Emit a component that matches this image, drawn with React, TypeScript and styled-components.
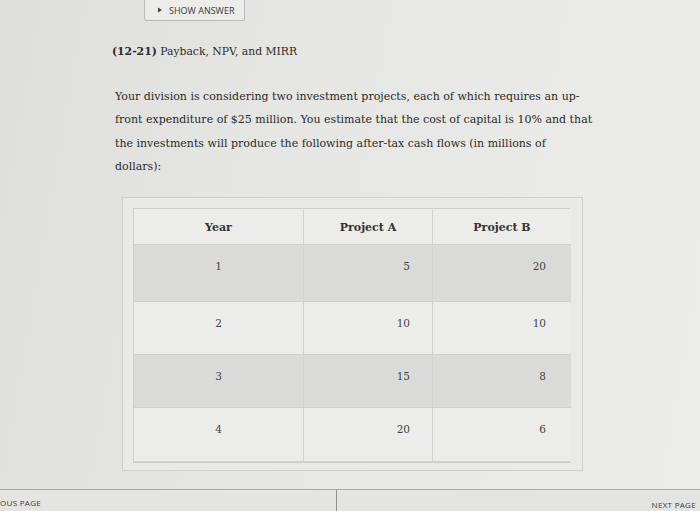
import React from "react";
import styled, { createGlobalStyle } from "styled-components";

const Global = createGlobalStyle`
  html, body { margin: 0; padding: 0; }
  body {
    width: 700px; height: 511px; overflow: hidden;
    background: linear-gradient(100deg, #dededc 0%, #e6e6e4 40%, #ececea 100%);
    font-family: "DejaVu Serif", "Liberation Serif", serif;
    color: #2f2f2f;
  }
`;

const Page = styled.div`
  width: 700px;
  height: 511px;
  display: flex;
  flex-direction: column;
`;

const Content = styled.div`
  flex: 1;
  display: flex;
  flex-direction: column;
  padding-left: 112px;
`;

const ShowAnswer = styled.div`
  margin-left: 32px;
  width: 101px;
  height: 21px;
  box-sizing: border-box;
  border: 1px solid #b9b9b7;
  border-top: none;
  border-radius: 0 0 3px 3px;
  background: #ececea;
  display: flex;
  align-items: center;
  gap: 6px;
  padding-left: 12px;
  font-family: "Open Sans", "Liberation Sans", sans-serif;
  font-size: 9px;
  color: #3a3a3a;
`;

const Title = styled.h1`
  margin: 22px 0 0 0;
  font-size: 10.8px;
  font-weight: normal;
  line-height: 18px;
  color: #2c2c2c;
  b { font-weight: bold; }
`;

const Para = styled.p`
  margin: 24px 0 0 3px;
  font-size: 11px;
  line-height: 23.3px;
  color: #2a2a2a;
  span { display: block; white-space: nowrap; }
`;

const TableFrame = styled.div`
  margin: 19px 0 0 10px;
  width: 461px;
  height: 274px;
  box-sizing: border-box;
  border: 1px solid #cfcfcd;
  background: #e9e9e7;
  padding: 10px 12px 0 10px;
`;

const Table = styled.div`
  display: grid;
  grid-template-columns: 170px 129px 138px;
  grid-template-rows: 36px 57px 53px 53px 54px;
  border: 1px solid #cdcdcb;
`;

const Cell = styled.div<{ $shade: boolean; $align: "center" | "right"; $head?: boolean }>`
  display: flex;
  align-items: flex-start;
  justify-content: ${(p) => (p.$align === "right" ? "flex-end" : "center")};
  padding: ${(p) => (p.$head ? "12px" : "15px")} ${(p) => (p.$align === "right" ? "22px" : "0")} 0 0;
  background: ${(p) => (p.$shade ? "#dadad8" : "#ececea")};
  border-right: 1px solid #d2d2d0;
  border-bottom: 1px solid #d0d0ce;
  font-size: ${(p) => (p.$head ? "11px" : "10.5px")};
  font-weight: ${(p) => (p.$head ? "bold" : "normal")};
  color: ${(p) => (p.$head ? "#333" : "#444")};
  &:nth-child(3n) { border-right: none; padding-right: ${(p) => (p.$align === "right" ? "25px" : "0")}; }
`;

const Footer = styled.div`
  height: 21px;
  border-top: 1px solid #a9a9a7;
  background: #e4e4e2;
  display: grid;
  grid-template-columns: 336px 1fr;
  font-family: "Open Sans", "Liberation Sans", sans-serif;
  font-size: 8px;
  color: #3a3a3a;
  letter-spacing: 0.3px;
`;

const FootCell = styled.div<{ $right?: boolean }>`
  display: flex;
  align-items: ${(p) => (p.$right ? "flex-end" : "center")};
  justify-content: ${(p) => (p.$right ? "flex-end" : "flex-start")};
  border-left: ${(p) => (p.$right ? "1px solid #8e8e8c" : "none")};
  white-space: nowrap;
  overflow: hidden;
  padding-top: ${(p) => (p.$right ? "0" : "4px")};
`;

const NextText = styled.span`
  margin-right: 4px;
  margin-bottom: 1px;
  line-height: 10px;
`;

const rows = [
  ["1", "5", "20"],
  ["2", "10", "10"],
  ["3", "15", "8"],
  ["4", "20", "6"],
];

export default function App() {
  return (
    <Page>
      <Global />
      <Content>
        <ShowAnswer>
          <svg width="6" height="6" viewBox="0 0 6 6"><path d="M1 0.5 L5 3 L1 5.5 Z" fill="#444" /></svg>
          SHOW ANSWER
        </ShowAnswer>
        <Title>
          <b>(12-21)</b> Payback, NPV, and MIRR
        </Title>
        <Para>
          <span>Your division is considering two investment projects, each of which requires an up-</span>
          <span>front expenditure of $25 million. You estimate that the cost of capital is 10% and that</span>
          <span>the investments will produce the following after-tax cash flows (in millions of</span>
          <span>dollars):</span>
        </Para>
        <TableFrame>
          <Table>
            <Cell $shade={false} $align="center" $head>Year</Cell>
            <Cell $shade={false} $align="center" $head>Project A</Cell>
            <Cell $shade={false} $align="center" $head>Project B</Cell>
            {rows.map((r, i) => (
              <React.Fragment key={i}>
                <Cell $shade={i % 2 === 0} $align="center">{r[0]}</Cell>
                <Cell $shade={i % 2 === 0} $align="right">{r[1]}</Cell>
                <Cell $shade={i % 2 === 0} $align="right">{r[2]}</Cell>
              </React.Fragment>
            ))}
          </Table>
        </TableFrame>
      </Content>
      <Footer>
        <FootCell>OUS PAGE</FootCell>
        <FootCell $right>
          <NextText>NEXT PAGE</NextText>
        </FootCell>
      </Footer>
    </Page>
  );
}
